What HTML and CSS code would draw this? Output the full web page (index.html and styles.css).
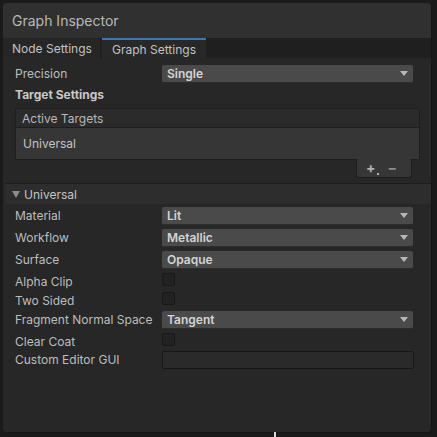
FILE: index.html
```html
<!DOCTYPE html>
<html>
<head>
<meta charset="utf-8">
<link rel="stylesheet" href="styles.css">
</head>
<body>
<div class="panel">
  <div class="title">Graph Inspector</div>
  <div class="tabs">
    <div class="tab">Node Settings</div>
    <div class="tab active">Graph Settings</div>
  </div>
  <div class="content">
    <div class="section">
      <div class="row r-drop">
        <div class="label">Precision</div>
        <div class="drop"><span>Single</span><i class="arrow"></i></div>
      </div>
      <div class="row r-head"><div class="label bold">Target Settings</div></div>
      <div class="list">
        <div class="list-head">Active Targets</div>
        <div class="list-body">Universal</div>
      </div>
      <div class="list-foot">
        <div class="foot-btns">
          <span class="plus">+<i class="dot"></i></span>
          <span class="minus">−</span>
        </div>
      </div>
    </div>
    <div class="fold"><i class="fold-arrow"></i>Universal</div>
    <div class="section props">
      <div class="row r-drop"><div class="label">Material</div><div class="drop"><span>Lit</span><i class="arrow"></i></div></div>
      <div class="row r-drop"><div class="label">Workflow</div><div class="drop"><span>Metallic</span><i class="arrow"></i></div></div>
      <div class="row r-drop"><div class="label">Surface</div><div class="drop"><span>Opaque</span><i class="arrow"></i></div></div>
      <div class="row r-check"><div class="label">Alpha Clip</div><div class="check"></div></div>
      <div class="row r-check"><div class="label">Two Sided</div><div class="check"></div></div>
      <div class="row r-drop"><div class="label">Fragment Normal Space</div><div class="drop"><span>Tangent</span><i class="arrow"></i></div></div>
      <div class="row r-check2"><div class="label">Clear Coat</div><div class="check"></div></div>
      <div class="row r-field"><div class="label">Custom Editor GUI</div><div class="field"></div></div>
    </div>
  </div>
</div>
<div class="tick"></div>
</body>
</html>
```
FILE: styles.css
```css
html, body {
  margin: 0;
  padding: 0;
  background: #1a1a1a;
  width: 437px;
  height: 437px;
  overflow: hidden;
  font-family: Inter, "Noto Sans", sans-serif;
  font-size: 12px;
  color: #bdbdbd;
}
body { position: relative; }
.panel {
  margin: 3px 6px 0 3px;
  height: 429px;
  background: #272727;
  border-radius: 4px;
  display: flex;
  flex-direction: column;
  overflow: hidden;
  box-shadow: 1px 1px 0 #151515;
}
.title {
  height: 35px;
  background: #303030;
  padding-left: 9px;
  display: flex;
  align-items: center;
  font-size: 14px;
  color: #b8b8b8;
}
.tabs {
  height: 20px;
  background: #1f1f1f;
  display: flex;
}
.tab {
  height: 20px;
  display: flex;
  align-items: center;
  color: #c2c2c2;
  box-sizing: border-box;
}
.tab:first-child {
  width: 97px;
  padding-left: 9px;
  background: #262626;
}
.tab.active {
  margin-left: 2px;
  width: 104px;
  padding-left: 10px;
  background: #282828;
  border-top: 2px solid #3d76b3;
}
.content {
  flex: 1;
  display: flex;
  flex-direction: column;
  background: #272727;
}
.section {
  padding-left: 12px;
}
.section:first-child { padding-top: 7px; }
.row {
  display: flex;
  align-items: flex-start;
}
.label {
  width: 147px;
  flex: none;
  color: #bdbdbd;
  line-height: 18px;
}
.bold { font-weight: 700; color: #c8c8c8; }
.r-drop { height: 22px; }
.r-head { height: 22px; margin-top: -1px; }
.r-check { height: 19px; }
.r-check2 { height: 18px; }
.r-field { height: 18px; }
.drop {
  width: 251px;
  height: 18px;
  box-sizing: border-box;
  background: #4a4a4a;
  border-bottom: 1px solid #2c2c2c;
  border-radius: 2px;
  display: flex;
  align-items: center;
  justify-content: space-between;
  padding: 0 5px;
  font-weight: 600;
  color: #d4d4d4;
}
.arrow {
  width: 0;
  height: 0;
  border-left: 4px solid transparent;
  border-right: 4px solid transparent;
  border-top: 5px solid #b8b8b8;
}
.check {
  width: 13px;
  height: 13px;
  box-sizing: border-box;
  background: #222;
  border: 1px solid #181818;
  border-radius: 2px;
}
.field {
  width: 252px;
  height: 18px;
  box-sizing: border-box;
  background: #2a2a2a;
  border: 1px solid #161616;
  border-radius: 2px;
}
.list {
  width: 405px;
  box-sizing: border-box;
  border: 1px solid #1e1e1e;
  border-radius: 2px;
}
.list-head {
  height: 18px;
  background: #2b2b2b;
  border-bottom: 1px solid #1e1e1e;
  padding-left: 6px;
  display: flex;
  align-items: center;
  color: #b8b8b8;
}
.list-body {
  height: 31px;
  background: #363636;
  padding-left: 7px;
  display: flex;
  align-items: center;
  color: #c4c4c4;
}
.list-foot {
  width: 405px;
  display: flex;
  justify-content: flex-end;
  height: 23px;
}
.foot-btns {
  margin-right: 8px;
  width: 56px;
  height: 19px;
  margin-top: -1px;
  background: #363636;
  border: 1px solid #1e1e1e;
  border-top: none;
  box-sizing: border-box;
  border-radius: 0 0 3px 3px;
  display: flex;
  align-items: center;
  gap: 12px;
  padding-left: 9px;
  color: #b0b0b0;
  font-size: 14px;
  font-weight: 700;
}
.plus { position: relative; line-height: 14px; }
.dot {
  position: absolute;
  right: -3px;
  bottom: 0;
  width: 2px;
  height: 2px;
  background: #b0b0b0;
}
.minus { line-height: 14px; color: #8e8e8e; }
.fold {
  height: 20px;
  margin-left: 2px;
  border-top: 1px solid #1c1c1c;
  background: #2d2d2d;
  display: flex;
  align-items: center;
  padding-left: 7px;
  color: #c4c4c4;
  margin-bottom: 3px;
}
.fold-arrow {
  width: 0;
  height: 0;
  border-left: 4px solid transparent;
  border-right: 4px solid transparent;
  border-top: 7px solid #8c8c8c;
  margin-right: 4px;
}
.props { padding-left: 12px; }
.tick {
  position: absolute;
  left: 274px;
  top: 432px;
  width: 2px;
  height: 5px;
  background: #d8d8d8;
}
```
